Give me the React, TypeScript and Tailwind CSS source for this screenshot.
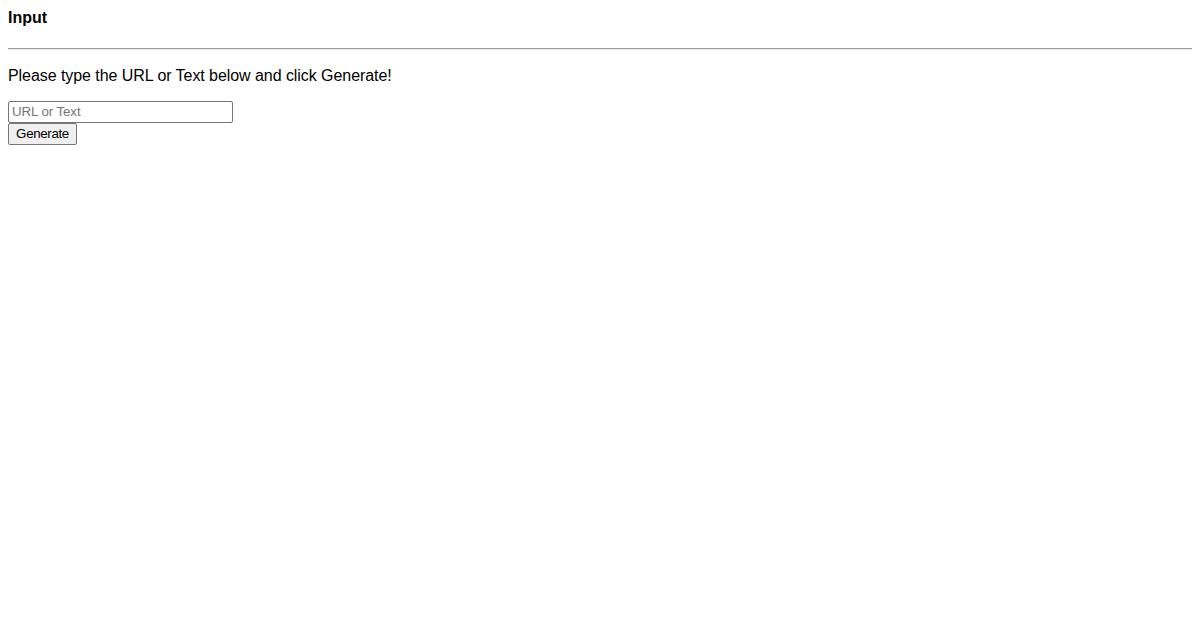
export default function App() {
  return (
    <div className="min-h-screen bg-white p-2 text-black font-['Liberation_Sans',Arial,sans-serif] text-base">
      <h4 className="font-bold text-base leading-[19px]">Input</h4>
      <hr className="mt-[21px] mb-[17px] border-0 border-t border-b border-t-[#9a9a9a] border-b-[#eeeeee]" />
      <p className="leading-[18.4px] mb-[16px] tracking-[-0.06px]">Please type the URL or Text below and click Generate!</p>
      <div className="flex flex-col items-start">
        <input
          type="text"
          placeholder="URL or Text"
          className="w-[225px] h-[22px] px-[3px] pb-[2px] border border-[#767676] rounded-[2px] text-[13.33px] tracking-[-0.1px] font-['Liberation_Sans',Arial,sans-serif] placeholder:text-[#757575] bg-white outline-none"
        />
        <button className="h-[22px] w-[69px] px-[7px] pb-[2px] border border-[#767676] rounded-[2px] bg-[#efefef] text-[13.33px] tracking-[-0.35px] leading-none font-['Liberation_Sans',Arial,sans-serif]">
          Generate
        </button>
      </div>
    </div>
  );
}
